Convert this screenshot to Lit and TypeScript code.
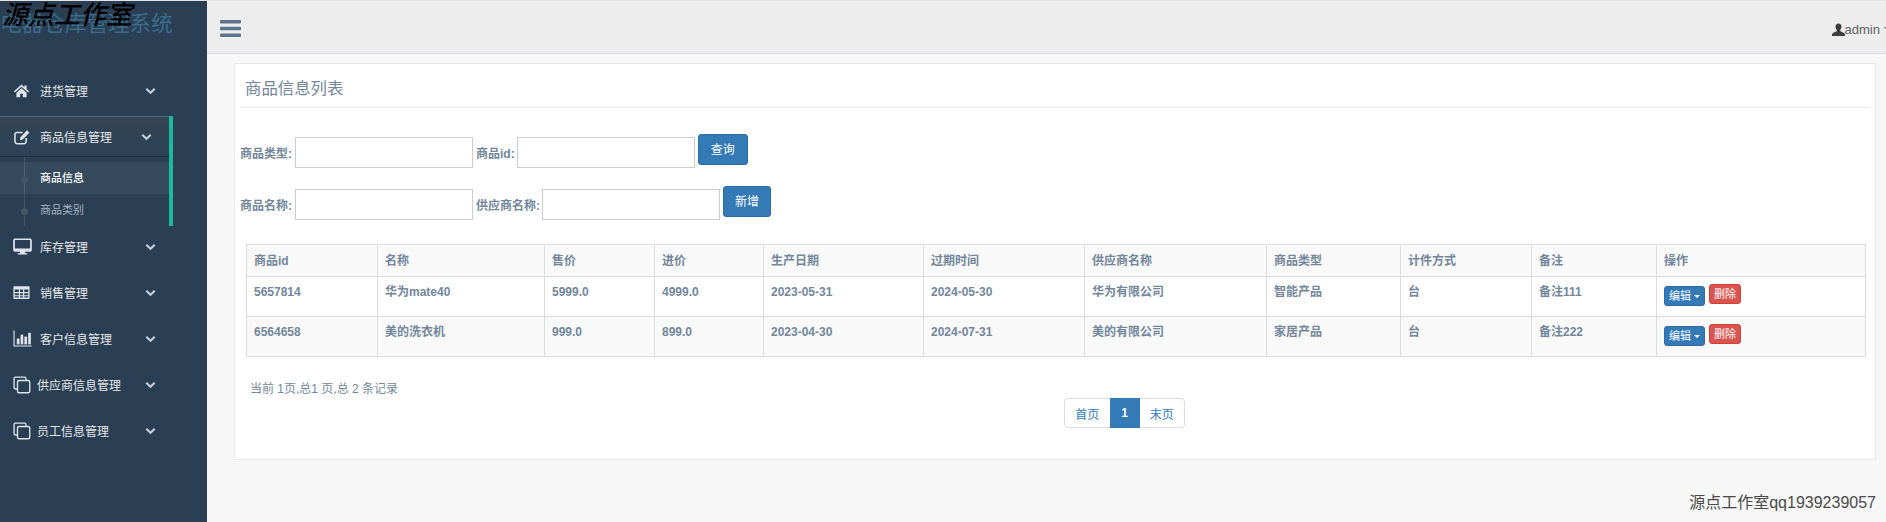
import { LitElement, html, css, svg } from "lit";
import { customElement } from "lit/decorators.js";

const icons: Record<string, unknown> = {
  home: svg`<path d="M10 3 1 11l1.2 1.4L10 5.6l7.800 6.800L19 11l-3-2.600V4.200h-2.600v1.900z"/><path d="M4 12.600V18h4.400v-4.200h3.200V18H16v-5.400l-6-5.200z"/>`,
  edit: svg`<path fill="none" stroke="currentColor" stroke-width="1.7" d="M14.600 11v4a2.400 2.400 0 0 1-2.400 2.400H4.600A2.400 2.400 0 0 1 2.200 15V7.400A2.400 2.400 0 0 1 4.600 5h6"/><path d="m15.600 2.600 2.600 2.600-7.400 7.600-3.200.7.7-3.300z"/>`,
  desktop: svg`<path fill-rule="evenodd" d="M2 1.500h16A1.800 1.800 0 0 1 19.800 3.300v10.400A1.800 1.800 0 0 1 18 15.500h-5.600l.6 1.600H15v1.200H5v-1.200h2l.6-1.600H2A1.800 1.800 0 0 1 .2 13.700V3.300A1.800 1.800 0 0 1 2 1.500zm0 1.700v9h16v-9z"/>`,
  table: svg`<path fill-rule="evenodd" d="M1.500 2.500h17a1 1 0 0 1 1 1v13a1 1 0 0 1-1 1h-17a1 1 0 0 1-1-1v-13a1 1 0 0 1 1-1zM2 6.500v3h4.900v-3zm6.300 0v3h3.500v-3zm4.900 0v3H18v-3zM2 10.900v2.200h4.900v-2.200zm6.300 0v2.200h3.500v-2.200zm4.900 0v2.200H18v-2.200zM2 14.400V16h4.900v-1.600zm6.300 0V16h3.500v-1.600zm4.900 0V16H18v-1.600z"/>`,
  chart: svg`<path d="M.5 1.500h1.200v15.800h18v1.200H.5z"/><rect x="4" y="10" width="2.800" height="6.200"/><rect x="8" y="6" width="2.800" height="10.200"/><rect x="12" y="8" width="2.800" height="8.200"/><rect x="16" y="4" width="2.800" height="12.200"/>`,
  clone: svg`<g fill="none" stroke="currentColor" stroke-width="1.500"><path d="M5 14.400H3A1.700 1.700 0 0 1 1.200 12.700V3A1.700 1.700 0 0 1 3 1.200h9.600A1.700 1.700 0 0 1 14.400 3v2"/><rect x="5" y="5" width="13.600" height="13.600" rx="1.700"/></g>`,
};

const icon = (name: string) =>
  html`<svg class="ico ${name}" viewBox="0 0 20 20" fill="currentColor">${icons[name]}</svg>`;
const chevron = html`<svg class="chev" viewBox="0 0 12 8"><path d="M1.400 1.600 6 6l4.600-4.400" fill="none" stroke="currentColor" stroke-width="2.400"/></svg>`;

const menu = [
  { icon: "home", label: "进货管理" },
  { icon: "edit", label: "商品信息管理", active: true, sub: ["商品信息", "商品类别"] },
  { icon: "desktop", label: "库存管理" },
  { icon: "table", label: "销售管理" },
  { icon: "chart", label: "客户信息管理" },
  { icon: "clone", label: "供应商信息管理", tight: true },
  { icon: "clone", label: "员工信息管理", tight: true },
];

const colWidths = [131, 167, 110, 109, 160, 161, 182, 134, 131, 125, 209];
const head = ["商品id", "名称", "售价", "进价", "生产日期", "过期时间", "供应商名称", "商品类型", "计件方式", "备注", "操作"];
const rows = [
  ["5657814", "华为mate40", "5999.0", "4999.0", "2023-05-31", "2024-05-30", "华为有限公司", "智能产品", "台", "备注111"],
  ["6564658", "美的洗衣机", "999.0", "899.0", "2023-04-30", "2024-07-31", "美的有限公司", "家居产品", "台", "备注222"],
];

@customElement("app-root")
export class AppRoot extends LitElement {
  static styles = css`
    :host {
      display: block;
      font-family: "Liberation Sans", "Noto Sans CJK SC", sans-serif;
      color: #73879c;
    }
    * { box-sizing: border-box; }
    .root {
      position: relative;
      display: grid;
      grid-template-columns: 207px 1fr;
      height: 522px;
      overflow: hidden;
      border-top: 1px solid #e4e4e4;
      background: #f7f7f7;
    }
    .stamp {
      position: absolute;
      left: 2px;
      top: -1px;
      font-size: 26px;
      line-height: 30px;
      font-weight: 500;
      font-style: italic;
      color: #000;
    }
    .side { background: #2a3f54; }
    .brand {
      height: 47px;
      margin: 0 0 22px;
      padding-top: 7px;
      font-size: 21.600px;
      line-height: 32px;
      white-space: nowrap;
      color: #3b6c8c;
    }
    .nav { list-style: none; margin: 0; padding: 0; width: 173px; }
    .item { margin-bottom: 5px; }
    .item.active {
      margin-bottom: 0;
      border-right: 4px solid #1abb9c;
    }
    .row {
      display: flex;
      align-items: center;
      height: 41px;
      padding: 0 17px 0 13px;
      font-size: 12px;
      color: #e7e7e7;
    }
    .active .row {
      background: linear-gradient(#334556, #2c4257);
      box-shadow: inset 0 1px 0 rgba(255, 255, 255, 0.16), inset 0 -1px 0 #1f3040;
    }
    .ibox { width: 27px; flex: none; display: flex; color: #dfe5ea; }
    .tight .ibox { width: 24px; }
    .ico { width: 19px; height: 19px; display: block; }
    .ico.home { width: 17px; height: 17px; }
    .ico.table { width: 17px; height: 17px; }
    .ico.edit { width: 18px; height: 18px; }
    .ico.clone { width: 18px; height: 18px; }
    .chev { width: 11px; height: 8px; margin-left: auto; color: #c5ced8; }
    .sub {
      position: relative;
      list-style: none;
      margin: 0;
      padding: 5px 0 0;
    }
    .sub::before {
      content: "";
      position: absolute;
      left: 24px;
      top: 0;
      bottom: 0;
      width: 1px;
      background: #425668;
    }
    .sub li {
      position: relative;
      height: 32px;
      padding-left: 40px;
      font-size: 11px;
      line-height: 32px;
      color: #a9b5c1;
    }
    .sub li::before {
      content: "";
      position: absolute;
      left: 21px;
      top: 14px;
      width: 7px;
      height: 7px;
      border-radius: 50%;
      background: #425668;
    }
    .sub li.on {
      background: rgba(255, 255, 255, 0.06);
      color: #fff;
      font-weight: 500;
    }
    .main { min-width: 0; display: flex; flex-direction: column; }
    .top {
      height: 53px;
      flex: none;
      display: flex;
      align-items: center;
      justify-content: space-between;
      padding: 0 0 0 13px;
      background: #ededed;
      border-bottom: 1px solid #d9dee4;
      overflow: hidden;
    }
    .burger { width: 21px; height: 17px; color: #5a738e; margin-top: 2px; }
    .user {
      display: flex;
      align-items: center;
      margin: 4px -6px 0 0;
      font-size: 13px;
      color: #5f6164;
    }
    .user svg.u { width: 13px; height: 13px; color: #3d3d3d; }
    .user svg.c { width: 8px; height: 6px; margin-left: 4px; color: #777; }
    .content { flex: 1; padding: 9px 10px 0 27px; display: flex; flex-direction: column; }
    .panel {
      height: 397px;
      flex: none;
      padding: 0 5px;
      background: #fff;
      border: 1px solid #e6e9ed;
    }
    .title {
      height: 44px;
      padding: 10px 0 0 5px;
      font-size: 16.400px;
      line-height: 28px;
      border-bottom: 1px solid #e6e9ed;
    }
    .form { margin-top: 26px; }
    .frow {
      display: flex;
      align-items: center;
      height: 36px;
      margin-bottom: 16px;
      font-size: 12px;
      font-weight: 700;
    }
    .frow label { white-space: nowrap; }
    .frow label.l1 { width: 55px; }
    .frow label.l2 { margin-left: 3px; margin-right: 3px; }
    input {
      width: 178px;
      height: 31px;
      padding: 0 4px;
      border: 1px solid #ccc;
      background: #fff;
      flex: none;
    }
    input.short { margin-left: -1px; }
    .btn {
      height: 31px;
      margin: 0 0 5px 3px;
      padding: 0 12px 3px;
      border: 1px solid #2e6da4;
      border-radius: 3px;
      background: #337ab7;
      color: #fff;
      font: 400 12px "Liberation Sans", "Noto Sans CJK SC", sans-serif;
    }
    .btn.narrow { padding: 0 11px 3px; }
    table {
      width: 1619px;
      margin: 22px 0 0 6px;
      table-layout: fixed;
      border-collapse: collapse;
      font-size: 12px;
      font-weight: 700;
    }
    th, td {
      padding: 7px 7px;
      border: 1px solid #ddd;
      text-align: left;
      vertical-align: top;
      line-height: 16px;
    }
    th { height: 32px; background: #f9f9f9; font-weight: 700; vertical-align: middle; padding-top: 0; padding-bottom: 0; }
    td { height: 40px; }
    tbody tr:nth-child(even) td { background: #f9f9f9; }
    .ops { display: flex; align-items: flex-start; gap: 4px; }
    .mini {
      display: flex;
      align-items: center;
      justify-content: center;
      height: 20px;
      border-radius: 3px;
      color: #fff;
      font-size: 11px;
      font-weight: 400;
    }
    .mini.edit { width: 41px; margin-top: 2px; background: #337ab7; border: 1px solid #2e6da4; }
    .mini.del { width: 32px; background: #d9534f; border: 1px solid #d43f3a; }
    .caret {
      width: 0;
      height: 0;
      margin-left: 3px;
      border-top: 3px solid #fff;
      border-left: 3px solid transparent;
      border-right: 3px solid transparent;
    }
    .status { margin: 23px 0 0 10px; font-size: 12px; line-height: 18px; }
    .pager {
      display: flex;
      width: 121px;
      height: 30px;
      margin-left: 824px;
      font-size: 12px;
      color: #337ab7;
      border: 1px solid #ddd;
      border-radius: 4px;
    }
    .pager span { display: flex; align-items: center; justify-content: center; flex: 1; }
    .pager .cur { flex: none; width: 30px; margin: -1px 0; background: #337ab7; color: #fff; font-weight: 700; }
    .foot {
      margin-top: 33px;
      text-align: right;
      font-size: 16px;
      line-height: 20px;
      color: #4a4a4a;
    }
  `;

  render() {
    return html`<div class="root">
      <aside class="side">
        <div class="brand">电器仓库管理系统</div>
        <ul class="nav">
          ${menu.map(
            (m) => html`<li class="item ${m.active ? "active" : ""} ${m.tight ? "tight" : ""}">
              <div class="row"><span class="ibox">${icon(m.icon)}</span>${m.label}${chevron}</div>
              ${m.sub
                ? html`<ul class="sub">${m.sub.map((s, i) => html`<li class=${i === 0 ? "on" : ""}>${s}</li>`)}</ul>`
                : ""}
            </li>`
          )}
        </ul>
      </aside>
      <div class="main">
        <header class="top">
          <svg class="burger" viewBox="0 0 21 17" fill="currentColor"><rect width="21" height="3.600" rx="1"/><rect y="6.700" width="21" height="3.600" rx="1"/><rect y="13.400" width="21" height="3.600" rx="1"/></svg>
          <div class="user">
            <svg class="u" viewBox="0 0 13 13" fill="currentColor"><path d="M6.500.5c1.900 0 3 1.400 3 3.300 0 1.300-.6 2.500-1.300 3.200v1.200c1.600.7 4.300 1.300 4.800 3V13H0v-1.800c.5-1.700 3.200-2.300 4.800-3V7C4.100 6.300 3.500 5.100 3.500 3.800 3.500 1.900 4.600.5 6.500.5z"/></svg>
            <span>admin</span>
            <svg class="c" viewBox="0 0 8 6"><path d="M.5 1 4 4.500 7.500 1" fill="none" stroke="currentColor" stroke-width="1.200"/></svg>
          </div>
        </header>
        <div class="content">
          <section class="panel">
            <div class="title">商品信息列表</div>
            <div class="form">
              <div class="frow">
                <label class="l1">商品类型:</label><input />
                <label class="l2">商品id:</label><input class="short" />
                <button class="btn">查询</button>
              </div>
              <div class="frow">
                <label class="l1">商品名称:</label><input />
                <label class="l2">供应商名称:</label><input class="short" />
                <button class="btn narrow">新增</button>
              </div>
            </div>
            <table>
              <colgroup>${colWidths.map((w) => html`<col style="width:${w}px" />`)}</colgroup>
              <thead><tr>${head.map((h) => html`<th>${h}</th>`)}</tr></thead>
              <tbody>
                ${rows.map(
                  (r) => html`<tr>
                    ${r.map((c) => html`<td>${c}</td>`)}
                    <td><div class="ops"><span class="mini edit">编辑<i class="caret"></i></span><span class="mini del">删除</span></div></td>
                  </tr>`
                )}
              </tbody>
            </table>
            <div class="status">当前 1页,总1 页,总 2 条记录</div>
            <div class="pager"><span>首页</span><span class="cur">1</span><span>末页</span></div>
          </section>
          <div class="foot">源点工作室qq1939239057</div>
        </div>
      </div>
      <div class="stamp">源点工作室</div>
    </div>`;
  }
}
